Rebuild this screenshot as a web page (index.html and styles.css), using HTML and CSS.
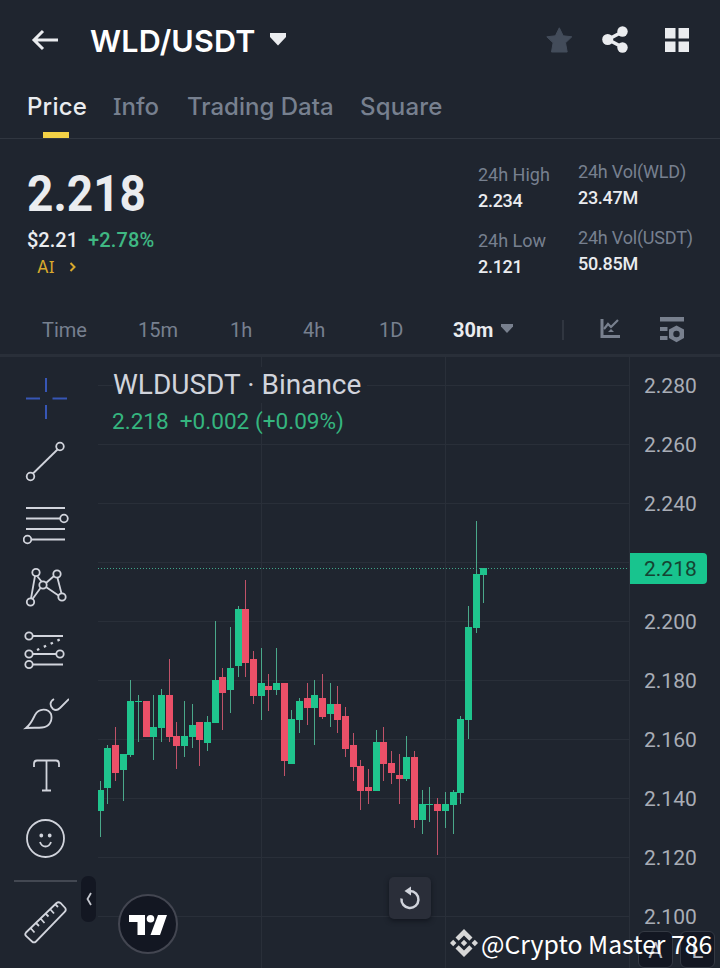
FILE: index.html
```html
<!DOCTYPE html>
<html lang="en">
<head>
<meta charset="utf-8">
<title>WLD/USDT</title>
<link rel="stylesheet" href="styles.css">
</head>
<body>
<div class="app">
  <header class="topbar">
    <svg class="back" width="28" height="22" viewBox="0 0 28 22"><path d="M12 2 3 11l9 9M3.500 11H27" fill="none" stroke="#eaecef" stroke-width="3"/></svg>
    <h1 class="pair">WLD/USDT</h1>
    <svg class="caret" width="16" height="14" viewBox="0 0 16 14"><path d="M0 0h16v4L8 12.500 0 4z" fill="#eaecef"/></svg>
    <div class="actions">
      <svg width="28" height="28" viewBox="0 0 28 28"><path d="m13.300 1.800 3.900 8 8.600 1-6.300 6 1.700 9.200H5.500l1.600-9.200-6.300-6 8.600-1z" fill="#434c5a" stroke="#434c5a" stroke-linejoin="round"/></svg>
      <svg width="28" height="28" viewBox="0 0 28 28" fill="#eaecef"><path d="M21 5.500 6 13.500l15 8" fill="none" stroke="#eaecef" stroke-width="3.500"/><circle cx="20.500" cy="5.500" r="5.200"/><circle cx="5.700" cy="13.500" r="5.500"/><circle cx="20.500" cy="21.500" r="5.200"/></svg>
      <svg width="24" height="24" viewBox="0 0 24 24" fill="#eaecef"><path d="M0 0h10.500v10.500H0zM13.500 0H24v10.500H13.500zM0 13.500h10.500V24H0zM13.500 13.500H24V24H13.500z"/></svg>
    </div>
  </header>

  <nav class="tabs">
    <a class="tab tab-price active">Price</a>
    <a class="tab tab-info"><span class="slab">I</span>nfo</a>
    <a class="tab tab-data">Trading Data</a>
    <a class="tab tab-square">Square</a>
  </nav>

  <section class="summary">
    <div class="quote">
      <div class="last">2.218</div>
      <div class="change"><span class="fiat">$2.21</span><span class="pct">+2.78%</span></div>
      <div class="ai"><span>A<span class="slab">I</span></span><svg width="8" height="10" viewBox="0 0 8 10"><path d="m1.500 1 4 4-4 4" fill="none" stroke="#d9a92c" stroke-width="2"/></svg></div>
    </div>
    <dl class="stats stats-range">
      <dt>24h High</dt><dd>2.234</dd>
      <dt>24h Low</dt><dd>2.121</dd>
    </dl>
    <dl class="stats stats-volume">
      <dt>24h Vol(WLD)</dt><dd>23.47M</dd>
      <dt>24h Vol(USDT)</dt><dd>50.85M</dd>
    </dl>
  </section>

  <div class="intervals">
    <span class="iv iv-time">Time</span>
    <span class="iv iv-15">15m</span>
    <span class="iv iv-1h">1h</span>
    <span class="iv iv-4h">4h</span>
    <span class="iv iv-1d">1D</span>
    <span class="iv iv-30 selected">30m</span>
    <svg class="iv-caret" width="12" height="10" viewBox="0 0 12 10"><path d="M0 0h12v2.500L6 9 0 2.500z" fill="#78808e"/></svg>
    <i class="divider"></i>
    <svg class="indicator" width="20" height="20" viewBox="0 0 20 20" fill="none" stroke="#78808e"><path d="M2 0v17.500h18" stroke-width="3"/><path d="m4 10 4-5 3 3 7-7" stroke-width="2.200"/><path d="m8 13 3-3 3 3z" fill="#78808e" stroke="none"/></svg>
    <svg class="settings" width="26" height="26" viewBox="0 0 26 26" fill="#78808e"><path d="M1 0h24v4.500H1zM1 10h7.500v4H1zM1 19h7.500v4H1z"/><path fill-rule="evenodd" d="m17.500 8.500 7.500 4V21l-7.500 4.300L10 21v-8.500zM17.500 13.800a3.200 3.200 0 1 0 0 6.400 3.200 3.200 0 0 0 0-6.400z"/></svg>
  </div>

  <main class="workspace">
    <aside class="tools">
      <svg class="tool" viewBox="23 378 46 42" height="42"><path d="M46 378v14M46 405v14M26 398.500h14M52.500 398.500H67" stroke="#3756b5" stroke-width="2"/></svg>
      <svg class="tool" viewBox="23 440 46 42" height="42"><path d="m33 472.500 25-24.500"/><circle cx="30.500" cy="475.500" r="3.800"/><circle cx="60" cy="445.500" r="3.800"/></svg>
      <svg class="tool" viewBox="23 503 46 42" height="42"><path d="M26 507h39M26 517.500h34M26 528h39M31 538.500h34"/><circle cx="64" cy="517.500" r="3.800"/><circle cx="27.500" cy="538.500" r="3.800"/></svg>
      <svg class="tool" viewBox="23 565 46 42" height="42"><path d="m35 575-4 22.500M37.500 575.500l4 5M32.500 598l8-11M46 582l8-7M46 586l12.500 8.500M57.500 577l4 15.500"/><circle cx="36" cy="571.500" r="3.700"/><circle cx="57" cy="573" r="3.700"/><circle cx="43" cy="584" r="3.700"/><circle cx="30.500" cy="601" r="3.700"/><circle cx="62" cy="596" r="3.700"/></svg>
      <svg class="tool" viewBox="23 629 46 42" height="42"><path d="M33 636h30M33 654h23M33 664.500h30"/><path d="m37 650 25-11.500" stroke-width="2.300" stroke-dasharray="2.500 5"/><circle cx="29" cy="636" r="3.700"/><circle cx="29" cy="654" r="3.700"/><circle cx="60" cy="654" r="3.700"/><circle cx="29" cy="664.500" r="3.700"/></svg>
      <svg class="tool" viewBox="23 692 46 42" height="42"><path d="M26 728c5-4 7-9 9-13 4-7 13-7 16-1 2 7-2 13-9 13.500-4 .5-11 0-16 .5zM54 699c-5 3-4 7-1 10 3 2 5 1 7-1l9-9"/></svg>
      <svg class="tool" viewBox="23 755 46 42" height="42"><path d="M34 767v-3q0-3.500 3-3.500h19q3 0 3 3.500v3M46.500 761v29.500M42 790.500h9"/></svg>
      <svg class="tool" viewBox="23 818 46 42" height="42"><circle cx="45.500" cy="838.500" r="18.500"/><path d="M40 842c2 6 9 6 11 0"/><circle cx="41.300" cy="835.500" r="1" fill="#d1d4dc"/><circle cx="49.700" cy="835.500" r="1" fill="#d1d4dc"/></svg>
      <i class="tool-rule"></i>
      <svg class="tool ruler" viewBox="23 900 46 48" height="48"><path d="M26 933.500 56.500 904q2-1.500 4 0l4.700 5q1.300 2-.3 3.700L36 942.500q-2 1.800-4 0l-6-5.500q-1.500-1.800 0-3.500zM31 929.500l3.500 4M36.500 924.500l2.500 2.500M41 920l3.500 4M46 915l2.500 2.500M50.500 910.500l3.500 4M55.500 905.500l2.500 2.500"/></svg>
    </aside>
    <section class="chart">
      <svg class="plot" width="532" height="611" viewBox="98 357 532 611">
        <g id="grid"></g>
        <g id="candles"></g>
        <path class="price-line" d="M98 568.500H630"/>
      </svg>
      <div class="legend">
        <div class="symbol">WLDUSDT · Binance</div>
        <div class="legend-values"><span>2.218</span><span>+0.002 (+0.09%)</span></div>
      </div>
      <div class="collapse"><svg width="8" height="14" viewBox="0 0 8 14"><path d="M6 1 2.500 7 6 13" fill="none" stroke="#c4c7ce" stroke-width="1.800"/></svg></div>
      <div class="tv"><svg width="38" height="20" viewBox="0 0 38 20" fill="#fff"><path d="M0 0h16v20H8.500V7H0zM29 0h9l-7 20H21.500z"/><circle cx="21.500" cy="3.800" r="3.800"/></svg></div>
      <div class="reset"><svg width="22" height="24" viewBox="0 0 22 24"><path d="M2.500 12.500A8.500 8.500 0 1 0 11 5" fill="none" stroke="#d1d4dc" stroke-width="2.500"/><path d="M5.500 5 12 .5v9z" fill="#d1d4dc"/></svg></div>
    </section>
    <aside class="scale">
      <span>2.280</span><span>2.260</span><span>2.240</span><span class="covered"></span><span>2.200</span><span>2.180</span><span>2.160</span><span>2.140</span><span>2.120</span><span>2.100</span>
      <b class="price-tag">2.218</b>
      <div class="modes"><span>A</span><span>L</span></div>
    </aside>
    <div class="watermark">
      <svg width="28" height="28" viewBox="0 0 28 28" fill="#d7d7d7"><path d="m14 0 8.500 8.500-3.200 3.200L14 6.400l-5.300 5.300-3.200-3.200zM3.200 10.800 6.400 14l-3.200 3.200L0 14zM14 10.800l3.200 3.200-3.200 3.200-3.200-3.200zM24.800 10.800 28 14l-3.200 3.200-3.200-3.200zM14 28l8.500-8.500-3.200-3.200-5.300 5.300-5.300-5.300-3.200 3.200z"/></svg>
      <span>@Crypto Master 786</span>
    </div>
  </main>
</div>
<script src="chart.js"></script>
</body>
</html>
```
FILE: styles.css
```css
* { box-sizing: border-box; }
body {
  margin: 0;
  background: #1f252f;
  color: #eaecef;
  font-family: Roboto, "Liberation Sans", sans-serif;
}
svg { display: block; flex: none; }
.app { width: 720px; height: 968px; overflow: hidden; display: flex; flex-direction: column; }

.topbar { height: 80px; display: flex; align-items: center; padding: 1px 31px 0 31px; }
.back { margin-top: -1px; }
.pair { margin: 1px 0 0 31px; width: 166px; font: 600 30.5px/40px Inter, sans-serif; letter-spacing: 0.15px; color: #fff; white-space: nowrap; }
.caret { margin-left: 14px; }
.actions { margin-left: auto; display: flex; align-items: center; gap: 35px; padding-bottom: 1px; }
.actions svg:first-child { margin-right: -7px; }

.tabs { height: 59px; display: flex; gap: 27px; padding-left: 27px; border-bottom: 1px solid #303640; }
.tab { position: relative; font: 500 24px/53px Inter, sans-serif; color: #77808f; white-space: nowrap; }
.slab { font-family: "Noto Sans", sans-serif; line-height: 1; }
.tab-price { width: 59px; letter-spacing: .2px; }
.tab-info { width: 47px; }
.tab-data { width: 146px; }
.tab-square { width: 83px; letter-spacing: .2px; }
.tab.active { color: #eaecef; }
.tab.active::after { content: ""; position: absolute; left: 16px; bottom: 0; width: 26px; height: 6px; background: #f3d146; }

.summary { height: 165px; display: flex; padding-left: 27px; }
.quote { width: 451px; padding-top: 25px; }
.last { width: 130px; font-size: 50px; line-height: 60px; font-weight: 700; letter-spacing: 0; transform: scaleX(.92); transform-origin: left; }
.change { display: flex; gap: 10px; font-size: 20px; line-height: 32px; font-weight: 500; }
.pct { color: #3fb883; letter-spacing: .15px; }
.ai { display: flex; align-items: center; gap: 14px; padding-left: 10px; height: 22px; color: #d9a92c; font: 400 17px/22px Inter, sans-serif; }
.stats { margin: 0; width: 100px; padding-top: 23px; font-size: 18px; white-space: nowrap; }
.stats-volume { padding-top: 20px; letter-spacing: -.2px; }
.stats dt { line-height: 26px; color: #77808f; }
.stats dd { margin: 0 0 14px; line-height: 26px; font-weight: 500; letter-spacing: -.3px; }

.intervals { height: 54px; display: flex; align-items: center; padding: 2px 0 0 42px; border-bottom: 3px solid #292f39; font-size: 20px; color: #77808f; }
.iv-time { width: 96px; }
.iv-15 { width: 92px; }
.iv-1h { width: 73px; }
.iv-4h { width: 76px; }
.iv-1d { width: 74px; }
.iv-30 { width: 48px; }
.iv.selected { color: #eaecef; font-weight: 700; }
.iv-caret { margin-top: -2px; }
.indicator { margin-top: -2px; }
.divider { width: 2px; height: 20px; margin: 0 36px 0 49px; background: #303640; }
.settings { margin-left: 39px; }

.workspace { position: relative; flex: 1; display: flex; }
.tools { width: 98px; display: flex; flex-direction: column; padding: 21px 0 0 23px; gap: 20.8px; }
.tool { width: 46px; fill: none; stroke: #d1d4dc; stroke-width: 1.8; }
.tool-rule { height: 2px; width: 63px; margin: 0 0 0 -9px; background: #434852; }
.ruler { margin-top: -4px; }
.chart { position: relative; width: 532px; }
.grid-line { stroke: #292f39; stroke-width: 1; }
.price-line { stroke: #3fa68a; stroke-width: 1; stroke-dasharray: 1 2; }
.up { fill: #1fc48d; }
.down { fill: #ea5068; }
.up-wick { fill: #4aa88a; }
.down-wick { fill: #bf5268; }
.legend { position: absolute; left: 11px; top: 10px; width: 258px; padding-left: 4px; }
.symbol { font-size: 28px; line-height: 36px; color: #d1d4dc; background: #1f252f; white-space: nowrap; }
.legend-values { display: flex; gap: 11px; margin: 1px 0 0 -1px; font-size: 22.6px; line-height: 36px; color: #35b57f; white-space: nowrap; }
.collapse { position: absolute; left: -17px; top: 519px; width: 15px; height: 46px; border-radius: 7px; background: #131722; display: grid; place-items: center; }
.tv { position: absolute; left: 20px; top: 537px; width: 60px; height: 60px; border: 2px solid #434651; border-radius: 50%; background: #131722; display: grid; place-items: center; padding-top: 2px; }
.reset { position: absolute; left: 291px; top: 520px; width: 42px; height: 42px; border-radius: 5px; background: #2a2e39; box-shadow: 0 2px 5px #12161e; display: grid; place-items: center; }
.scale { position: relative; width: 90px; border-left: 1px solid #292f39; margin-left: -1px; display: flex; flex-direction: column; font-size: 21px; }
.scale > span { height: 59px; padding-left: 14px; line-height: 58px; color: #a9adb6; }
.price-tag { position: absolute; left: 0; top: 196px; width: 77px; height: 31px; padding-left: 14px; border-radius: 0 4px 4px 0; background: #18c48e; color: #154332; font-weight: 400; line-height: 32px; }
.modes { position: absolute; left: 8px; top: 574px; display: flex; gap: 7px; }
.modes span { width: 35px; height: 37px; border: 1px solid #343943; border-radius: 6px; background: #131722; color: #b2b5be; font-size: 22px; line-height: 37px; text-align: center; }
.watermark { position: absolute; left: 450px; top: 568px; height: 36px; display: flex; align-items: center; gap: 3px; font: 400 24.8px/36px "Noto Sans CJK SC", sans-serif; color: #fff; white-space: nowrap; }
```
FILE: chart.js
```javascript
// [left, high, body top, body bottom, low, direction]
const candles = [
  [97,781,790,811,837,1],[104,745,748,788,804,1],[112,727,745,773,781,0],[120,754,754,770,801,1],
  [127,680,701,755,757,1],[135,695,701,702,742,1],[143,701,701,737,737,0],[150,695,727,737,760,1],
  [158,689,695,728,742,1],[166,659,695,737,742,0],[173,722,736,746,769,0],[181,701,736,746,757,1],
  [189,704,725,737,748,1],[196,722,722,740,766,0],[204,716,722,743,751,1],[212,621,680,723,723,1],
  [219,668,677,693,730,0],[227,627,668,690,713,1],[235,606,609,666,677,1],[242,580,609,663,677,0],
  [250,651,659,696,704,0],[258,648,683,696,720,1],[265,674,686,690,711,0],[273,648,683,690,695,1],
  [281,683,683,761,776,0],[288,710,719,764,764,1],[296,698,701,720,733,1],[304,683,698,708,725,0],
  [311,680,695,708,745,1],[319,674,698,717,719,0],[327,683,704,714,727,1],[334,686,704,720,733,0],
  [342,707,716,749,757,0],[350,733,745,767,781,0],[357,760,766,791,810,0],[365,769,787,791,804,0],
  [373,730,742,791,791,1],[380,727,742,764,781,0],[388,751,763,773,784,0],[396,754,775,779,804,0],
  [403,736,757,779,781,1],[411,751,757,820,828,0],[419,790,804,820,834,1],[426,787,804,805,822,1],
  [434,798,804,811,855,0],[442,792,804,811,828,1],[450,790,792,805,834,1],[457,716,719,793,804,1],
  [465,606,627,720,739,1],[473,521,574,628,633,1],[480,568,568,575,603,1]
];

const SVG = "http://www.w3.org/2000/svg";
function add(parent, tag, attrs) {
  const el = document.createElementNS(SVG, tag);
  for (const key in attrs) el.setAttribute(key, attrs[key]);
  parent.appendChild(el);
}

const grid = document.getElementById("grid");
for (let y = 385.5; y < 968; y += 59) add(grid, "path", { class: "grid-line", d: `M98 ${y}H630` });
for (const x of [261.5, 445.5]) add(grid, "path", { class: "grid-line", d: `M${x} 357V968` });

const layer = document.getElementById("candles");
for (const [x, high, top, bottom, low, up] of candles) {
  const kind = up ? "up" : "down";
  add(layer, "rect", { class: kind + "-wick", x: x + 3, y: high, width: 1, height: low - high });
  add(layer, "rect", { class: kind, x, y: top, width: 7, height: bottom - top });
}
```
